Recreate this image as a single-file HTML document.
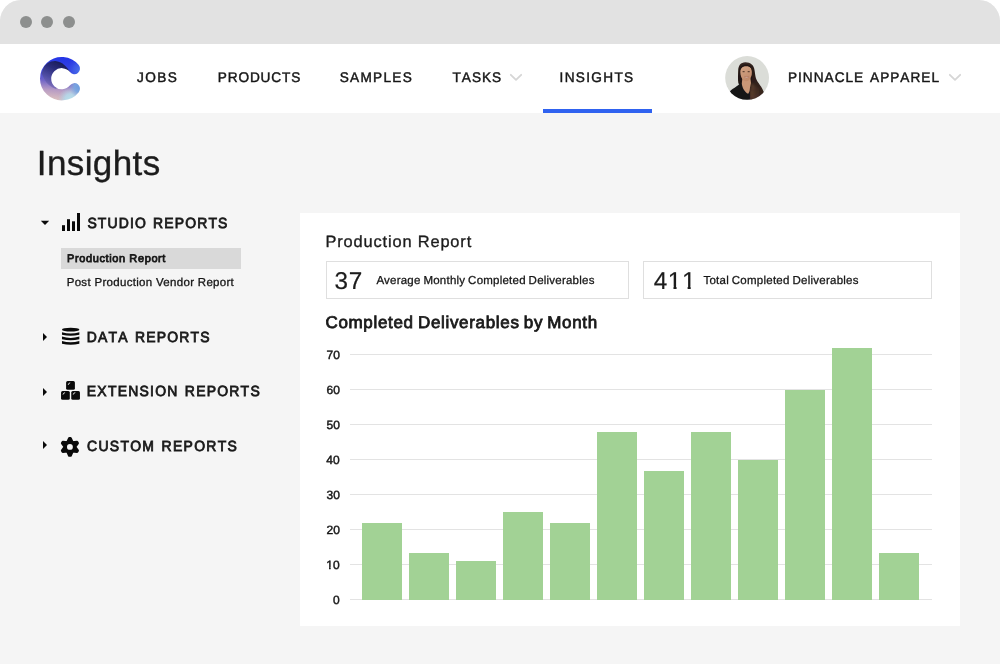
<!DOCTYPE html>
<html lang="en">
<head>
<meta charset="utf-8">
<title>Insights</title>
<style>
  html, body { margin: 0; padding: 0; }
  body { width: 1000px; height: 664px; overflow: hidden; background: #ffffff;
         font-family: "Liberation Sans", sans-serif; color: #1c1c1c; }
  #win { position: absolute; left: 0; top: 0; width: 1000px; height: 664px;
         background: #f5f5f5; border-radius: 21px 21px 0 0; overflow: hidden; will-change: transform; }
  #titlebar { position: absolute; left: 0; top: 0; width: 1000px; height: 44px; background: #e2e2e2; }
  .dot { position: absolute; top: 16px; width: 12px; height: 12px; border-radius: 50%; background: #8d8f8e; }
  #nav { position: absolute; left: 0; top: 44px; width: 1000px; height: 69px; background: #ffffff; }
  .t { position: absolute; white-space: nowrap; line-height: 1; margin: 0; padding: 0; font-weight: normal;
       transform-origin: 0 0; text-rendering: geometricPrecision; }
  .navi { font-kerning: none; font-size: 14px; color: #161616; -webkit-text-stroke: 0.45px #161616; }
  #underline { position: absolute; left: 543px; top: 65px; width: 109px; height: 4px; background: #2f62f0; }
  .sec { font-kerning: none; word-spacing: 1.2px; font-size: 14.7px; color: #181818; -webkit-text-stroke: 0.8px #181818; }
  .sub { font-size: 11.5px; color: #161616; -webkit-text-stroke: 0.3px #161616; }
  #s1 { font-size: 11px; -webkit-text-stroke: 0.8px #181818; }
  #sel { position: absolute; left: 61px; top: 248px; width: 180px; height: 21px; background: #d9d9d9; }
  #panel { position: absolute; left: 300px; top: 213px; width: 660px; height: 413px; background: #ffffff; }
  .stat { position: absolute; top: 48px; height: 38px; border: 1px solid #dfdfdf; box-sizing: border-box; background: #fff; }
  #b1 { left: 26px; width: 303px; }
  #b2 { left: 343px; width: 289px; }
  #h1 { font-size: 35px; color: #1c1c1c; -webkit-text-stroke: 0.35px #1c1c1c; }
  #h2 { font-size: 16.4px; color: #1c1c1c; -webkit-text-stroke: 0.35px #1c1c1c; }
  #h3 { word-spacing: -1.2px; font-size: 17px; color: #1a1a1a; -webkit-text-stroke: 0.8px #1a1a1a; }
  .num { font-size: 24.3px; color: #1c1c1c; -webkit-text-stroke: 0.2px #1c1c1c; }
  .lbl { word-spacing: -0.6px; font-size: 11.5px; color: #161616; -webkit-text-stroke: 0.28px #161616; }
  .ax { font-size: 12px; color: #151515; -webkit-text-stroke: 0.45px #151515; }
  svg { position: absolute; overflow: visible; }
  #n6 { word-spacing: 1px; }
  .one { display: inline-block; line-height: 1; clip-path: polygon(0 0, 100% 0, 100% 0.68em, 0.36em 0.68em, 0.36em 100%, 0.232em 100%, 0.232em 0.68em, 0 0.68em); }
  /*FIT-START*/
  #n1 { left: 137px; top: 26px; letter-spacing: 1.362px; transform: translate(0.11px, 0.00px) scaleX(0.975); }
  #n2 { left: 217px; top: 26px; letter-spacing: 0.853px; transform: translate(0.83px, 0.00px) scaleX(0.975); }
  #n3 { left: 339px; top: 26px; letter-spacing: 1.310px; transform: translate(0.68px, 0.00px) scaleX(0.975); }
  #n4 { left: 452px; top: 26px; letter-spacing: 0.991px; transform: translate(0.52px, 0.00px) scaleX(0.975); }
  #n5 { left: 559px; top: 26px; letter-spacing: 1.337px; transform: translate(0.56px, 0.00px) scaleX(0.975); }
  #n6 { left: 787px; top: 26px; letter-spacing: 1.037px; transform: translate(0.88px, 0.00px) scaleX(0.975); }
  #h1 { left: 36px; top: 146px; letter-spacing: 0.399px; transform: translate(0.80px, 0.00px); }
  #c1 { left: 87px; top: 217px; letter-spacing: 1.197px; transform: translate(0.40px, 0.00px) scaleX(0.95); }
  #c2 { left: 86px; top: 331px; letter-spacing: 1.242px; transform: translate(0.80px, 0.00px) scaleX(0.95); }
  #c3 { left: 86px; top: 385px; letter-spacing: 1.301px; transform: translate(0.81px, 0.00px) scaleX(0.95); }
  #c4 { left: 87px; top: 440px; letter-spacing: 1.354px; transform: translate(0.10px, 0.00px) scaleX(0.95); }
  #s1 { left: 67px; top: 254px; letter-spacing: 0.608px; transform: translate(0.04px, 0.00px); }
  #s2 { left: 66px; top: 278px; letter-spacing: 0.307px; transform: translate(0.68px, 0.00px); }
  #h2 { left: 25px; top: 21px; letter-spacing: 0.847px; transform: translate(0.52px, 0.00px); }
  #v1 { left: 7px; top: 8px; letter-spacing: 0.769px; transform: translate(0.39px, 0.00px); }
  #l1 { left: 49px; top: 14px; letter-spacing: 0.228px; transform: translate(0.38px, 0.00px); }
  #v2 { left: 9px; top: 8px; letter-spacing: 0.614px; transform: translate(0.69px, 0.00px); }
  #l2 { left: 59px; top: 14px; letter-spacing: 0.246px; transform: translate(0.46px, 0.00px); }
  #h3 { left: 25px; top: 101px; letter-spacing: 0.674px; transform: translate(0.46px, 0.00px); }
  #a0 { left: 26px; top: 136px; letter-spacing: 0.100px; transform: translate(0.47px, 0.00px); }
  #a1 { left: 26px; top: 171px; letter-spacing: 0.100px; transform: translate(0.46px, 0.00px); }
  #a2 { left: 26px; top: 206px; letter-spacing: 0.100px; transform: translate(0.38px, 0.00px); }
  #a3 { left: 26px; top: 241px; letter-spacing: 0.100px; transform: translate(0.30px, 0.00px); }
  #a4 { left: 26px; top: 276px; letter-spacing: 0.100px; transform: translate(0.45px, 0.00px); }
  #a5 { left: 26px; top: 311px; letter-spacing: 0.100px; transform: translate(0.47px, 0.00px); }
  #a6 { left: 26px; top: 346px; letter-spacing: 0.100px; transform: translate(0.27px, 0.00px); }
  #a7 { left: 33px; top: 381px; letter-spacing: 0.100px; transform: translate(0.03px, 0.00px); }
  /*FIT-END*/
</style>
</head>
<body>
<div id="win">
  <header id="titlebar">
    <div class="dot" style="left:20px"></div>
    <div class="dot" style="left:41px"></div>
    <div class="dot" style="left:63px"></div>
  </header>

  <nav id="nav">
    <!--LOGO--><svg id="logo" width="50" height="50" viewBox="36 54 50 50" style="left:36px;top:10px">
      <defs>
        <mask id="cmask" maskUnits="userSpaceOnUse" x="36" y="54" width="50" height="50">
          <path d="M74.4 68.6 A16.15 16.15 0 1 0 74.4 88.7" fill="none" stroke="#fff" stroke-width="11.2" stroke-linecap="round"/>
        </mask>
        <filter id="soft" x="-20%" y="-20%" width="140%" height="140%"><feGaussianBlur stdDeviation="0.45"/></filter>
        <linearGradient id="gBase" gradientUnits="userSpaceOnUse" x1="50" y1="57" x2="46" y2="101">
          <stop offset="0" stop-color="#2536e6"/><stop offset="0.3" stop-color="#3a44de"/><stop offset="0.52" stop-color="#6c62c8"/><stop offset="0.74" stop-color="#b89cc4"/><stop offset="0.92" stop-color="#d6bac0"/><stop offset="1" stop-color="#dcc6c6"/>
        </linearGradient>
        <radialGradient id="gB" gradientUnits="userSpaceOnUse" cx="70.5" cy="99.5" r="12.5">
          <stop offset="0" stop-color="#b8e0ea"/><stop offset="0.45" stop-color="#b4d8ea" stop-opacity="0.9"/><stop offset="1" stop-color="#b4c8e4" stop-opacity="0"/>
        </radialGradient>
        <radialGradient id="gC" gradientUnits="userSpaceOnUse" cx="80" cy="87" r="11">
          <stop offset="0" stop-color="#6c9cde"/><stop offset="0.5" stop-color="#78a8e2" stop-opacity="0.9"/><stop offset="1" stop-color="#8ab6e6" stop-opacity="0"/>
        </radialGradient>
        <radialGradient id="gT" gradientUnits="userSpaceOnUse" cx="80" cy="70" r="13">
          <stop offset="0" stop-color="#4a72ea"/><stop offset="0.5" stop-color="#3f5ee8" stop-opacity="0.8"/><stop offset="1" stop-color="#3048e6" stop-opacity="0"/>
        </radialGradient>
        <linearGradient id="gDark" gradientUnits="userSpaceOnUse" x1="58" y1="61" x2="46" y2="87">
          <stop offset="0" stop-color="#1a1c58"/><stop offset="0.3" stop-color="#2a2c7a"/><stop offset="0.65" stop-color="#504ea4"/><stop offset="1" stop-color="#7f70ba" stop-opacity="0.75"/>
        </linearGradient>
      </defs>
      <g mask="url(#cmask)">
        <rect x="36" y="54" width="50" height="50" fill="url(#gBase)"/>
        <rect x="36" y="54" width="50" height="50" fill="url(#gT)"/>
        <rect x="36" y="54" width="50" height="50" fill="url(#gB)"/>
        <rect x="36" y="54" width="50" height="50" fill="url(#gC)"/>
        <path filter="url(#soft)" fill="url(#gDark)" d="M43.2 69 C45 63.5 51 60.6 56.5 61.2 C62.5 61.9 66.5 66.5 70.5 72.5 L62 79 L56 89 C50.5 87 46.5 83.5 44.2 79 C43 76.5 42.2 74.5 41.5 73.5 Z"/>
      </g>
    </svg><!--/LOGO-->
    <a class="t navi" id="n1">JOBS</a>
    <a class="t navi" id="n2">PRODUCTS</a>
    <a class="t navi" id="n3">SAMPLES</a>
    <a class="t navi" id="n4">TASKS</a>
    <a class="t navi" id="n5">INSIGHTS</a>
    <div id="underline"></div>
    <!--AVATAR--><svg id="avatar" width="44" height="44" viewBox="725 56 44 44" style="left:725px;top:12px">
      <defs>
        <clipPath id="avc"><circle cx="747.1" cy="77.9" r="21.9"/></clipPath>
        <filter id="avb" x="-10%" y="-10%" width="120%" height="120%"><feGaussianBlur stdDeviation="0.6"/></filter>
        <filter id="avb2" x="-20%" y="-20%" width="140%" height="140%"><feGaussianBlur stdDeviation="0.9"/></filter>
        <linearGradient id="hairR" gradientUnits="userSpaceOnUse" x1="752" y1="66" x2="758" y2="100">
          <stop offset="0" stop-color="#2a1c17"/><stop offset="0.45" stop-color="#2e1f1a"/><stop offset="1" stop-color="#3e2a22"/>
        </linearGradient>
        <linearGradient id="hairT" gradientUnits="userSpaceOnUse" x1="745" y1="62" x2="745" y2="86">
          <stop offset="0" stop-color="#3a2a24"/><stop offset="0.3" stop-color="#241814"/><stop offset="1" stop-color="#1e1411"/>
        </linearGradient>
        <linearGradient id="skinF" gradientUnits="userSpaceOnUse" x1="742" y1="67" x2="751" y2="81">
          <stop offset="0" stop-color="#d2a384"/><stop offset="1" stop-color="#bd8666"/>
        </linearGradient>
      </defs>
      <g clip-path="url(#avc)">
        <rect x="725" y="56" width="44" height="44" fill="#dbddd8"/>
        <g filter="url(#avb)">
          <path fill="url(#hairT)" d="M745.4 62.2 C740.6 62.2 738.3 65.8 738.2 70.2 C738.1 74.5 737.7 79 738.4 83.6 L741.5 85.5 L752 85.5 C753.2 80 754.8 75 754.5 70 C754.2 65.4 750.6 62.2 745.4 62.2 Z"/>
          <path fill="#151419" d="M727 101 C727.5 95.5 729 91 732.5 88.9 C735.5 87.2 738.2 85.4 739.8 83.4 L751.5 84.5 C755 86.5 760.5 88 763 91 C765.2 93.6 765.8 97 766 101 Z"/>
          <path fill="#c99777" d="M742.4 78 L741.8 83.4 C742.2 88 744.8 92.2 748.2 93.8 C750.2 91 751.4 87.6 751.2 84.5 L750.4 78 Z"/>
          <path fill="url(#skinF)" d="M746 65.8 C742.6 65.8 740.3 68 740.3 72 C740.3 75.6 741.6 78.8 743.5 80.3 C745 81.4 747 81.5 748.5 80.5 C750.6 79 752 75.8 752 72 C752 68 749.5 65.8 746 65.8 Z"/>
          <path fill="#241814" d="M739.6 72 C739.4 67 742.2 64.4 745.8 64.4 C749.8 64.4 752.8 67 752.8 72 C752.2 69 750.4 67 748 66.3 C746.6 66 745 66.1 743.8 66.6 C741.6 67.5 740.2 69.4 739.6 72 Z"/>
          <path d="M742.6 71.7 h2 M747.7 71.7 h2" stroke="#3a2418" stroke-width="0.9" fill="none"/>
          <path d="M744.4 76.8 Q746.6 78.9 749 76.6 Q746.7 77.5 744.4 76.8 Z" fill="#f6eee8" stroke="#a86a58" stroke-width="0.45"/>
          <path fill="url(#hairR)" d="M750.9 66.4 C754.3 68.2 755 72.5 755.5 76.5 C756.2 81.5 761 85.2 762.9 90 C764.2 94 761.8 98 758 100.6 L749.8 101 C750.3 96 749 92 750 87.6 C750.8 84 751.9 80 752 75.6 C752 71.6 751.7 68.6 750.9 66.4 Z"/>
        </g>
        <g filter="url(#avb2)" fill="none" stroke="#94694a" stroke-linecap="round">
          <path d="M752.6 84.5 C751.6 89 751.4 94 752 98.5" stroke-width="1.1" opacity="0.8"/>
          <path d="M754.8 86 C754.6 90 754.2 94.5 755 98.5" stroke-width="0.9" opacity="0.7"/>
          <path d="M757.5 88 C758 91.5 757.6 95 757 98" stroke-width="0.8" opacity="0.45"/>
        </g>
      </g>
    </svg><!--/AVATAR-->
    <span class="t navi" id="n6">PINNACLE APPAREL</span>
    <svg id="navicons" width="1000" height="69" viewBox="0 44 1000 69" style="left:0;top:0">
      <polyline points="510.8,74.8 516,79.9 521.2,74.8" fill="none" stroke="#d6d6d6" stroke-width="1.8" stroke-linecap="round" stroke-linejoin="round"/>
      <polyline points="949.8,74.8 955,79.9 960.2,74.8" fill="none" stroke="#d6d6d6" stroke-width="1.8" stroke-linecap="round" stroke-linejoin="round"/>
    </svg>
  </nav>

  <h1 class="t" id="h1">Insights</h1>

  <aside id="side">
    <svg id="sideicons" width="100" height="260" viewBox="30 205 100 260" style="left:30px;top:205px">
    <g fill="#0a0a0a">
      <path d="M40.8 220.8 H49.2 L45 225 Z"/>
      <path d="M43 333 V341 L47 337 Z"/>
      <path d="M43 388 V396 L47 392 Z"/>
      <path d="M43 441 V449 L47 445 Z"/>
      <rect x="62" y="225.2" width="3" height="5.8"/>
      <rect x="67" y="219.2" width="3" height="11.8"/>
      <rect x="72" y="221.3" width="3" height="9.7"/>
      <rect x="77" y="213" width="3" height="18"/>
      <ellipse cx="70.66" cy="329.65" rx="8.7" ry="1.85"/>
      <path d="M61.98 332.2 Q70.66 334.9 79.34 332.2 V334.75 Q70.66 336.75 61.98 334.75 Z"/>
      <path d="M61.98 336.6 Q70.66 339.3 79.34 336.6 V339.15 Q70.66 341.15 61.98 339.15 Z"/>
      <path d="M61.98 341.0 Q70.66 343.7 79.34 341.0 V343.75 Q70.66 345.9 61.98 343.75 Z"/>
      <rect x="66.1" y="380.9" width="8.8" height="8.75" rx="1.5"/>
      <rect x="61.05" y="390.9" width="8.75" height="8.8" rx="1.5"/>
      <rect x="71.25" y="390.9" width="8.7" height="8.8" rx="1.5"/>
    </g>
    <g fill="none" stroke="#ececec" stroke-width="0.9" stroke-linecap="round">
      <path d="M68.25 384.5 Q68.3 383.1 69.8 382.9"/>
      <path d="M63.05 394.2 Q63.1 392.9 64.7 392.7"/>
      <path d="M73.25 394.2 Q73.3 392.9 74.9 392.7"/>
    </g>
    <path d="M72.37 442.68 L70.51 438.44 L69.33 438.44 L67.47 442.68 L62.87 442.17 L62.28 443.19 L65.02 446.92 L62.28 450.65 L62.87 451.67 L67.47 451.16 L69.33 455.40 L70.51 455.40 L72.37 451.16 L76.97 451.67 L77.56 450.65 L74.82 446.92 L77.56 443.19 L76.97 442.17 Z" fill="#0a0a0a" stroke="#0a0a0a" stroke-width="2.8" stroke-linejoin="round"/>
    <circle cx="69.92" cy="446.92" r="2.95" fill="#f5f5f5"/>
  </svg>
    <div class="t sec" id="c1">STUDIO REPORTS</div>
    <div id="sel"></div>
    <a class="t sub" id="s1">Production Report</a>
    <a class="t sub" id="s2">Post Production Vendor Report</a>
    <div class="t sec" id="c2">DATA REPORTS</div>
    <div class="t sec" id="c3">EXTENSION REPORTS</div>
    <div class="t sec" id="c4">CUSTOM REPORTS</div>
  </aside>

  <main id="panel">
    <h2 class="t" id="h2">Production Report</h2>
    <div class="stat" id="b1">
      <span class="t num" id="v1">37</span>
      <span class="t lbl" id="l1">Average Monthly Completed Deliverables</span>
    </div>
    <div class="stat" id="b2">
      <span class="t num" id="v2">4<span class="one">1</span><span class="one">1</span></span>
      <span class="t lbl" id="l2">Total Completed Deliverables</span>
    </div>
    <h3 class="t" id="h3">Completed Deliverables by Month</h3>
    <div id="chartbox">
      <svg id="chart" width="640" height="290" viewBox="320 340 640 290" style="left:20px;top:127px">
    <g fill="#e3e3e3">
      <rect x="350" y="354" width="582" height="1"/>
      <rect x="350" y="389" width="582" height="1"/>
      <rect x="350" y="424" width="582" height="1"/>
      <rect x="350" y="459" width="582" height="1"/>
      <rect x="350" y="494" width="582" height="1"/>
      <rect x="350" y="529" width="582" height="1"/>
      <rect x="350" y="564" width="582" height="1"/>
      <rect x="350" y="599" width="582" height="1"/>
    </g>
    <g fill="#a2d295">
      <rect x="362" y="523" width="40" height="77"/>
      <rect x="409" y="553" width="40" height="47"/>
      <rect x="456" y="561" width="40" height="39"/>
      <rect x="503" y="512" width="40" height="88"/>
      <rect x="550" y="523" width="40" height="77"/>
      <rect x="597" y="432" width="40" height="168"/>
      <rect x="644" y="471" width="40" height="129"/>
      <rect x="691" y="432" width="40" height="168"/>
      <rect x="738" y="460" width="40" height="140"/>
      <rect x="785" y="390" width="40" height="210"/>
      <rect x="832" y="348" width="40" height="252"/>
      <rect x="879" y="553" width="40" height="47"/>
    </g>
  </svg>
      <span class="t ax" id="a0">70</span>
      <span class="t ax" id="a1">60</span>
      <span class="t ax" id="a2">50</span>
      <span class="t ax" id="a3">40</span>
      <span class="t ax" id="a4">30</span>
      <span class="t ax" id="a5">20</span>
      <span class="t ax" id="a6"><span class="one">1</span>0</span>
      <span class="t ax" id="a7">0</span>
    </div>
  </main>
</div>
</body>
</html>
